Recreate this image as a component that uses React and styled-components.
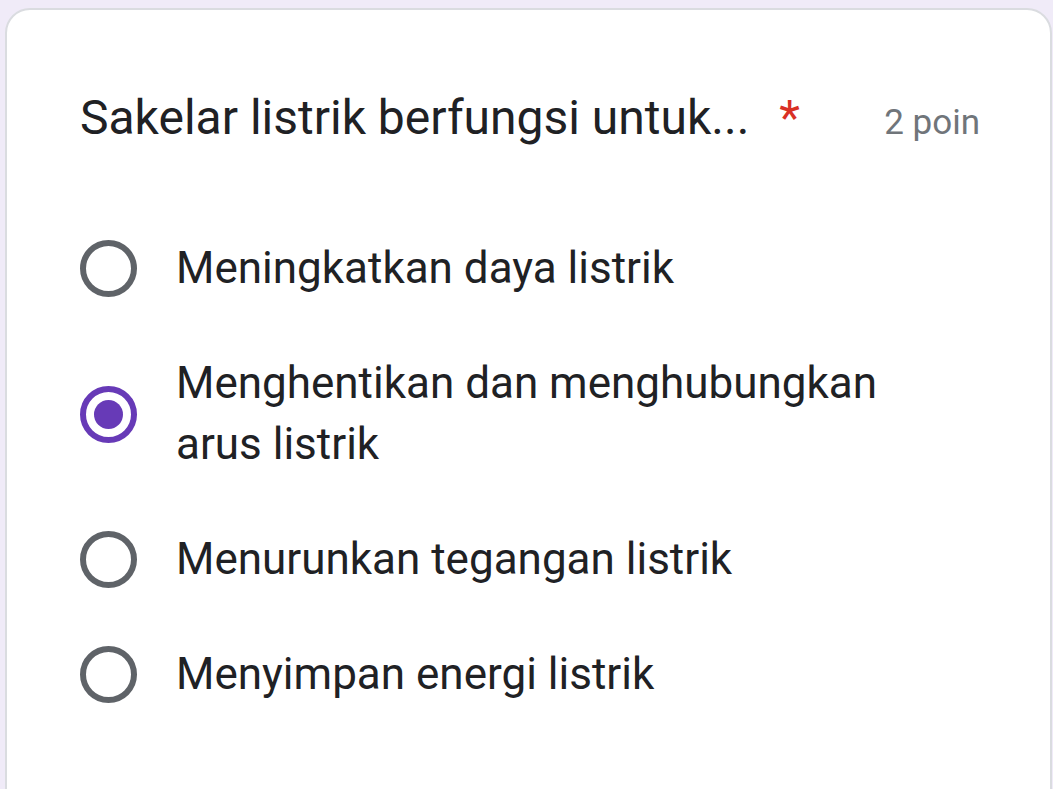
import React, { useState } from "react";
import styled, { createGlobalStyle, css } from "styled-components";

const GlobalStyle = createGlobalStyle`
  html, body {
    margin: 0;
    padding: 0;
    background: #f0ebf8;
    overflow: hidden;
  }
  body {
    font-family: Roboto, "Liberation Sans", Arial, sans-serif;
    color: #202124;
  }
`;

const Page = styled.div`
  padding: 8px 0 0 5px;
  height: 789px;
  box-sizing: border-box;
`;

const Card = styled.div`
  background: #fff;
  border: 2px solid #dadce0;
  border-radius: 25px;
  width: 1047px;
  min-height: 820px;
  box-sizing: border-box;
  padding: 77px 70px 0 73px;
`;

const Header = styled.div`
  display: flex;
  align-items: baseline;
  justify-content: space-between;
`;

const Title = styled.div`
  font-size: 48px;
  line-height: 62px;
  font-weight: 400;
`;

const Required = styled.span`
  color: #d93025;
  margin-left: 30px;
`;

const Points = styled.div`
  font-size: 35px;
  line-height: 62px;
  color: #70757a;
`;

const Options = styled.div`
  display: flex;
  flex-direction: column;
  gap: 54px;
  margin-top: 84px;
`;

const Option = styled.label`
  display: flex;
  align-items: center;
  gap: 39px;
  cursor: pointer;
`;

const Radio = styled.span`
  flex: none;
  width: 57px;
  height: 57px;
  box-sizing: border-box;
  border-radius: 50%;
  border: 6px solid #5f6368;
  display: flex;
  align-items: center;
  justify-content: center;
  ${({ checked }) => checked && css`
    border-color: #673ab7;
    &::after {
      content: "";
      width: 29px;
      height: 29px;
      border-radius: 50%;
      background: #673ab7;
    }
  `}
`;

const OptionText = styled.span`
  font-size: 44px;
  line-height: 61px;
  max-width: 720px;
`;

const choices = [
  "Meningkatkan daya listrik",
  "Menghentikan dan menghubungkan arus listrik",
  "Menurunkan tegangan listrik",
  "Menyimpan energi listrik",
];

export default function App() {
  const [selected, setSelected] = useState(1);
  return (
    <>
      <GlobalStyle />
      <Page>
        <Card>
          <Header>
            <Title>
              Sakelar listrik berfungsi untuk...
              <Required>*</Required>
            </Title>
            <Points>2 poin</Points>
          </Header>
          <Options>
            {choices.map((c, i) => (
              <Option key={c} onClick={() => setSelected(i)}>
                <Radio checked={selected === i} />
                <OptionText>{c}</OptionText>
              </Option>
            ))}
          </Options>
        </Card>
      </Page>
    </>
  );
}
